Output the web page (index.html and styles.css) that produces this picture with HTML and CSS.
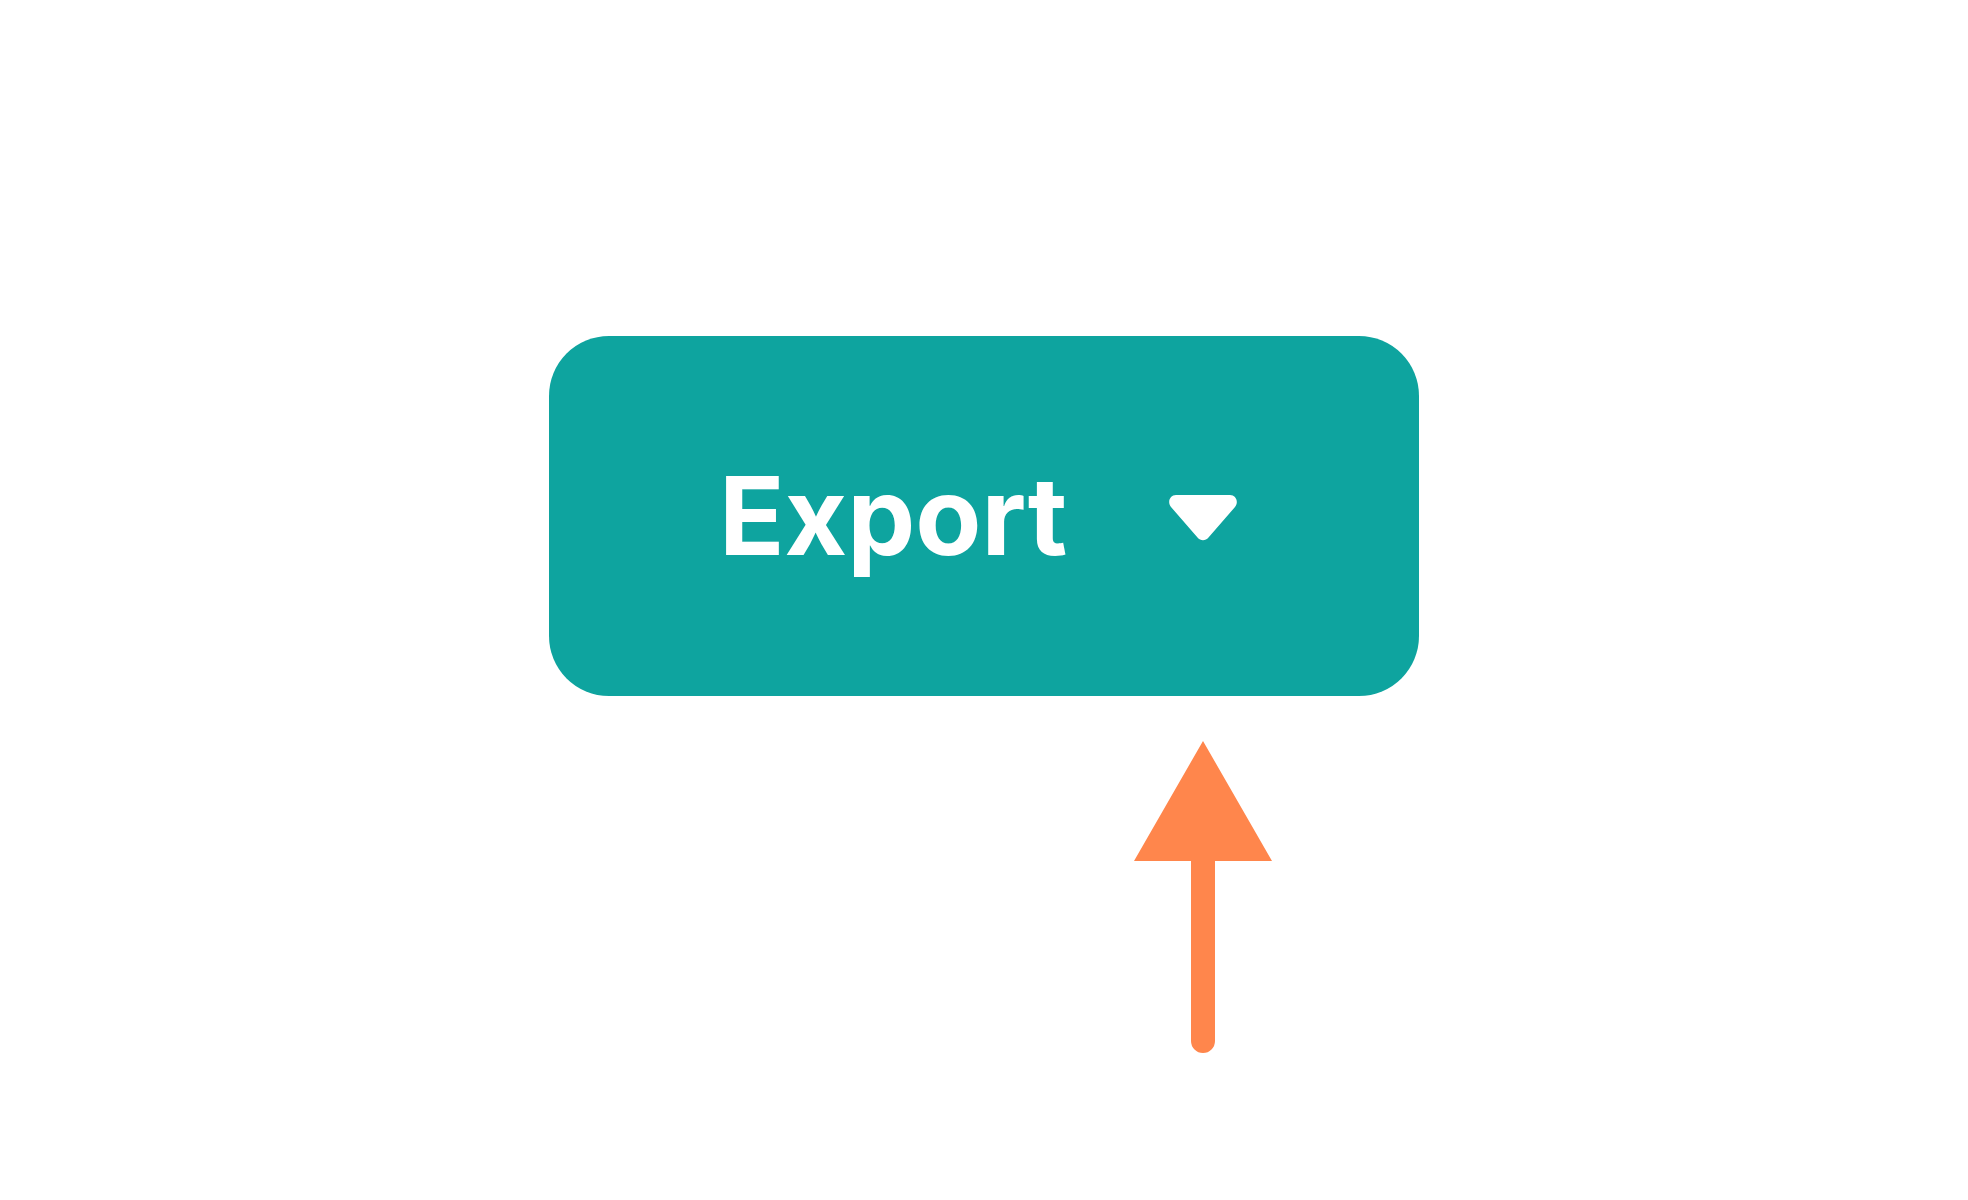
FILE: index.html
```
<!DOCTYPE html>
<html lang="en">

<head>
    <meta charset="UTF-8">
    <meta name="viewport" content="width=device-width, initial-scale=1.0">
    <title>Export</title>
    <link rel="stylesheet" href="styles.css">
</head>

<body>
    <main class="container">
        <div class="export">
            <button type="button" class="export-btn">
                Export
                <svg class="caret" viewBox="0 0 68 50" aria-hidden="true">
                    <path d="M7 4H61C67 4 70 11 66 16L39.500 46.500C36.500 50 31.500 50 28.500 46.500L2 16C-2 11 1 4 7 4Z" />
                </svg>
            </button>
            <!-- arrow pointing at the caret -->
            <svg class="arrow" viewBox="0 0 138 312" aria-hidden="true">
                <path d="M69 0L138 120H81V300A12 12 0 0 1 57 300V120H0Z" />
            </svg>
        </div>
    </main>
</body>

</html>
```

FILE: styles.css
```
* {
    box-sizing: border-box;
}

body {
    margin: 0;
    background-color: #fff;
    font-family: Inter, "Liberation Sans", sans-serif;
}

.container {
    display: flex;
    justify-content: center;
    padding: 336px 24px 40px;
}

.export {
    display: flex;
    flex-direction: column;
    align-items: flex-end;
    gap: 45px;
    width: 100%;
    max-width: 870px;
}

.export-btn {
    display: flex;
    align-items: center;
    justify-content: space-between;
    width: 100%;
    padding: 114px 182px 114px 170px;
    border: none;
    border-radius: 60px;
    background-color: #0ea49f;
    color: #fff;
    font-family: inherit;
    font-size: 108px;
    font-weight: 700;
    line-height: 132px;
    cursor: pointer;
}

.caret {
    width: 68px;
    fill: #fff;
}

.arrow {
    width: 138px;
    margin-right: 147px;
    fill: #ff864c;
}
```
